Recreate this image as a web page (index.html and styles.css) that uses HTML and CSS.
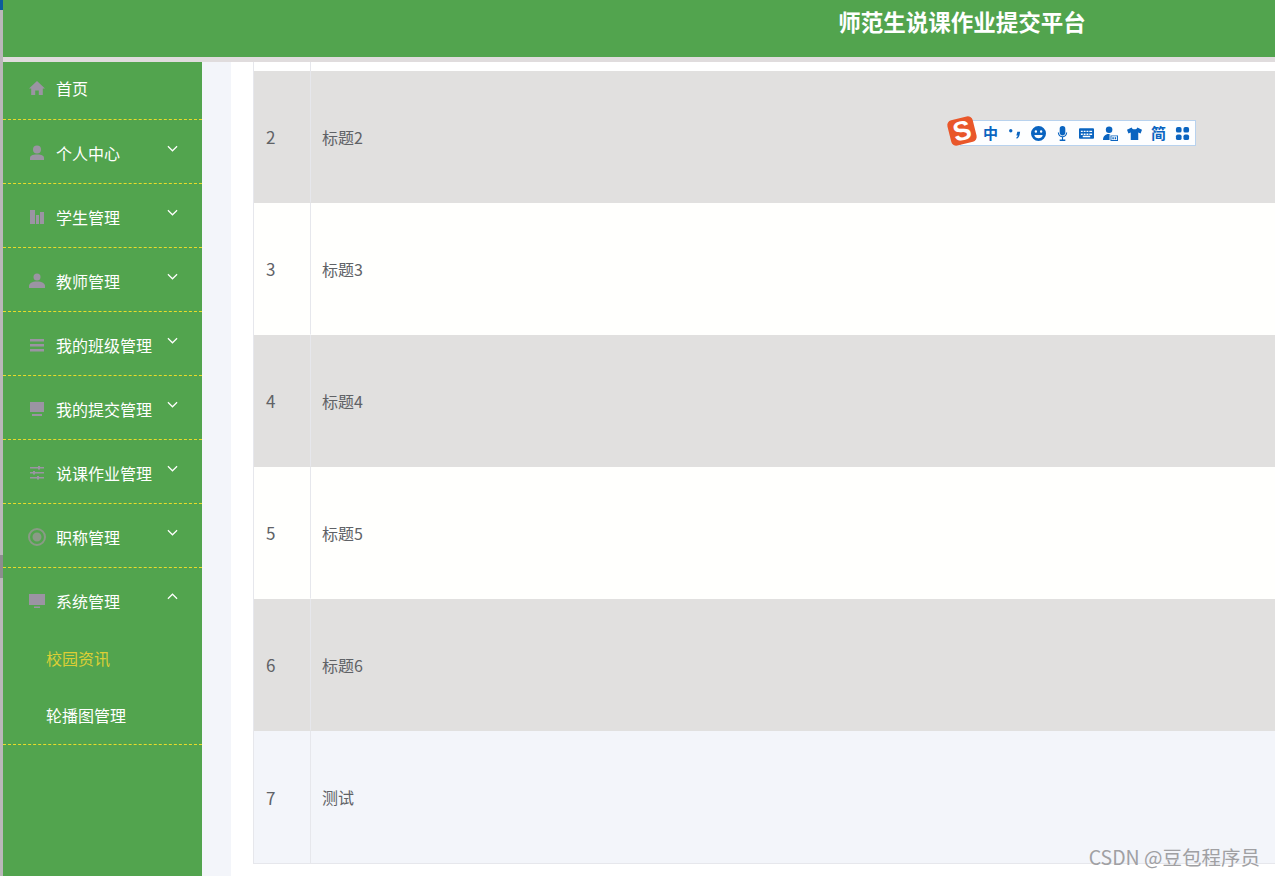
FILE: index.html
```html
<!DOCTYPE html>
<html lang="zh-CN">
<head>
<meta charset="utf-8">
<title>师范生说课作业提交平台</title>
<link rel="stylesheet" href="styles.css">
</head>
<body>
<div class="app">
  <div class="edge"><span class="edge-top"></span><span class="edge-mark"></span></div>
  <div class="main">
    <header class="topbar"><h1 class="brand">师范生说课作业提交平台</h1></header>
    <div class="divider"></div>
    <div class="body">
      <nav class="sidebar">
        <div class="nav-group"><div class="nav-item nav-home">
          <svg class="icon" viewBox="0 0 18 18"><path d="M9 2 1 9.500h2.200V16h4v-4.500h3.600V16h4V9.500H17z"/></svg>
          <span>首页</span>
        </div></div>
        <div class="nav-group"><div class="nav-item">
          <svg class="icon" viewBox="0 0 18 18"><circle cx="9" cy="5.500" r="4"/><path d="M2 16v-2c0-2 2-3.500 7-3.500s7 1.500 7 3.500v2z"/></svg>
          <span>个人中心</span>
          <svg class="chev" viewBox="0 0 12 7"><path d="M1 1l5 5 5-5"/></svg>
        </div></div>
        <div class="nav-group"><div class="nav-item">
          <svg class="icon" viewBox="0 0 18 18"><path d="M2 2h5v14H2zM8 7h3v9H8zM12 4h4v12h-4z"/></svg>
          <span>学生管理</span>
          <svg class="chev" viewBox="0 0 12 7"><path d="M1 1l5 5 5-5"/></svg>
        </div></div>
        <div class="nav-group"><div class="nav-item">
          <svg class="icon" viewBox="0 0 18 18"><circle cx="9" cy="5" r="3.500"/><path d="M1 16v-2c0-2.500 3-4.500 8-4.500s8 2 8 4.500v2z"/></svg>
          <span>教师管理</span>
          <svg class="chev" viewBox="0 0 12 7"><path d="M1 1l5 5 5-5"/></svg>
        </div></div>
        <div class="nav-group"><div class="nav-item">
          <svg class="icon" viewBox="0 0 18 18"><path d="M2 3h14v2.500H2zM2 8h14v2.500H2zM2 13h14v2.500H2z"/></svg>
          <span>我的班级管理</span>
          <svg class="chev" viewBox="0 0 12 7"><path d="M1 1l5 5 5-5"/></svg>
        </div></div>
        <div class="nav-group"><div class="nav-item">
          <svg class="icon" viewBox="0 0 18 18"><path d="M2 2h14v10H2zM4 14h10v2H4z"/></svg>
          <span>我的提交管理</span>
          <svg class="chev" viewBox="0 0 12 7"><path d="M1 1l5 5 5-5"/></svg>
        </div></div>
        <div class="nav-group"><div class="nav-item">
          <svg class="icon" viewBox="0 0 18 18"><path d="M2 3h14v1.500H2zM2 8h14v1.500H2zM2 13h14v1.500H2zM10 2h2v3.500h-2zM5 7h2v3.500H5zM9 12h2v3.500H9z"/></svg>
          <span>说课作业管理</span>
          <svg class="chev" viewBox="0 0 12 7"><path d="M1 1l5 5 5-5"/></svg>
        </div></div>
        <div class="nav-group"><div class="nav-item">
          <svg class="icon icon-soft" viewBox="0 0 18 18"><path fill-rule="evenodd" d="M9 0a9 9 0 1 0 0 18A9 9 0 0 0 9 0zm0 2a7 7 0 1 1 0 14A7 7 0 0 1 9 2zm0 2.500a4.500 4.500 0 1 0 0 9 4.500 4.500 0 0 0 0-9z"/></svg>
          <span>职称管理</span>
          <svg class="chev" viewBox="0 0 12 7"><path d="M1 1l5 5 5-5"/></svg>
        </div></div>
        <div class="nav-group">
          <div class="nav-item nav-open">
            <svg class="icon" viewBox="0 0 18 18"><path d="M1 2h16v11H1zM6 14.500h6V16H6z"/></svg>
            <span>系统管理</span>
            <svg class="chev" viewBox="0 0 12 7"><path d="M1 6l5-5 5 5"/></svg>
          </div>
          <div class="sub-item sub-active">校园资讯</div>
          <div class="sub-item">轮播图管理</div>
        </div>
      </nav>
      <div class="gutter"></div>
      <section class="content">
        <table class="data">
          <tbody>
            <tr class="row-cut"><td></td><td></td></tr>
            <tr class="row-gray"><td>2</td><td>标题2</td></tr>
            <tr class="row-white"><td>3</td><td>标题3</td></tr>
            <tr class="row-gray"><td>4</td><td>标题4</td></tr>
            <tr class="row-white"><td>5</td><td>标题5</td></tr>
            <tr class="row-gray"><td>6</td><td>标题6</td></tr>
            <tr class="row-pale"><td>7</td><td>测试</td></tr>
          </tbody>
        </table>
      </section>
    </div>
  </div>
</div>
<div class="ime">
  <span class="ime-logo"><span class="ime-s">S</span></span>
  <div class="ime-tools">
    <span class="ime-text">中</span>
    <svg class="ime-icon" viewBox="0 0 16 16"><circle cx="4" cy="5" r="1.800"/><path d="M11 6h3l-.500 3c-.3 2-1.300 3.500-3 4.500l-.7-1c1-.7 1.500-1.500 1.700-2.500H10z"/></svg>
    <svg class="ime-icon" viewBox="0 0 16 16"><path fill-rule="evenodd" d="M8 0a8 8 0 1 0 0 16A8 8 0 0 0 8 0zM5.200 4.500a1.300 1.300 0 1 1 0 2.600 1.300 1.300 0 0 1 0-2.600zm5.600 0a1.300 1.300 0 1 1 0 2.600 1.300 1.300 0 0 1 0-2.600zM3.500 9.500h9c-.5 2.200-2.300 3.500-4.500 3.500s-4-1.300-4.500-3.500z"/></svg>
    <svg class="ime-icon" viewBox="0 0 16 16"><rect x="5" y="0" width="6" height="10" rx="3"/><path d="M3 7h1.200c0 2.400 1.600 4 3.800 4s3.800-1.600 3.800-4H13c0 2.900-1.900 4.800-4.400 5.100V14.500H11V16H5v-1.500h2.400v-2.400C4.900 11.800 3 9.900 3 7z"/></svg>
    <svg class="ime-icon" viewBox="0 0 16 16"><path fill-rule="evenodd" d="M1 2.500h14a1 1 0 0 1 1 1v9a1 1 0 0 1-1 1H1a1 1 0 0 1-1-1v-9a1 1 0 0 1 1-1zM2 5v1.500h2V5zm3 0v1.500h2V5zm3 0v1.500h2V5zm3 0v1.500h3V5zM2 8v1.500h2V8zm3 0v1.500h2V8zm3 0v1.500h2V8zm3 0v1.500h3V8zM4 10.500V12h8v-1.500z"/></svg>
    <svg class="ime-icon" viewBox="0 0 16 16"><circle cx="6.500" cy="4" r="3.500"/><path d="M0 15c0-4 2.500-6.500 6-6.500 1 0 1.800.2 2.500.5H7v6z"/><path fill-rule="evenodd" d="M8 10h8v6H8zm1 1v4h6v-4z"/><path d="M10 12h1.500v2H10zM12.500 12H14v2h-1.500z"/></svg>
    <svg class="ime-icon" viewBox="0 0 16 16"><path d="M5 1.500 0 4l1.500 4L4 7v8h8V7l2.500 1L16 4l-5-2.500c-.5 1.500-1.500 2-3 2s-2.500-.5-3-2z"/></svg>
    <span class="ime-text">简</span>
    <svg class="ime-icon" viewBox="0 0 16 16"><rect x="1" y="1" width="6" height="6" rx="2"/><rect x="9" y="1" width="6" height="6" rx="2"/><rect x="1" y="9" width="6" height="6" rx="2"/><rect x="9" y="9" width="6" height="6" rx="2"/></svg>
  </div>
</div>
<div class="watermark">CSDN @豆包程序员</div>
</body>
</html>
```

FILE: styles.css
```css
* { box-sizing: border-box; }
html, body { margin: 0; height: 100%; overflow: hidden; }
body {
  font-family: "Noto Sans CJK SC", "Noto Sans", sans-serif;
  font-size: 16px;
  color: #606266;
  background: #fff;
}
.app { display: flex; height: 876px; }
.edge {
  width: 3px;
  flex: none;
  display: flex;
  flex-direction: column;
  background: #b9b7b9;
}
.edge-top { height: 10px; background: #0c5c9c; }
.edge-mark { height: 23px; margin-top: 545px; background: #8d8d8f; }
.main { flex: 1; min-width: 0; display: flex; flex-direction: column; }
.topbar {
  height: 57px;
  flex: none;
  background: #52a44e;
  display: flex;
  justify-content: center;
  padding: 5px 0 0 646px;
}
.brand {
  margin: 0;
  font-size: 22.500px;
  line-height: 33px;
  font-weight: 700;
  color: #fff;
  white-space: nowrap;
}
.divider { height: 5px; flex: none; background: #e0dcdd; }
.body { flex: 1; min-height: 0; display: flex; }
.sidebar { width: 199px; flex: none; background: #52a44e; color: #fff; }
.nav-group { border-bottom: 1px dashed #e8dc2a; }
.nav-item {
  height: 63px;
  padding: 2px 24px 0 25px;
  display: flex;
  align-items: center;
  white-space: nowrap;
}
.nav-home { height: 57px; padding-top: 0; padding-bottom: 5px; }
.nav-open { height: 62px; padding-top: 3px; }
.icon { width: 18px; height: 18px; margin-right: 10px; flex: none; fill: #9b94a3; }
.icon-soft { fill: #8a9a86; }
.chev {
  width: 11px;
  height: 7px;
  margin: 0 0 8px auto;
  flex: none;
  fill: none;
  stroke: #fff;
  stroke-width: 1.300;
}
.sub-item { height: 57px; padding: 0 0 1px 43px; display: flex; align-items: center; }
.sub-active { color: #dccf35; }
.gutter { width: 29px; flex: none; background: #f3f5fa; }
.content { flex: 1; min-width: 0; overflow: hidden; padding-left: 22px; background: #fff; }
.data {
  width: 1100px;
  table-layout: fixed;
  border-collapse: separate;
  border-spacing: 0;
  border-left: 1px solid #e6e7ec;
}
.data td {
  padding: 0 0 0 11px;
  border-right: 1px solid #e6e7ec;
  border-bottom: 1px solid transparent;
  height: 132px;
  line-height: 24px;
}
.data td:first-child { width: 57px; padding: 1px 0 0 12px; font-size: 17px; }
.data .row-cut td { height: 9px; background: #fff; padding: 0; line-height: 0; border-bottom: 0; }
.row-gray td { background: #e1e0df; }
.row-white td { background: #fffffd; }
.data .row-pale td { height: 133px; background: #f3f5fa; border-bottom-color: #e6e7ec; }
.ime {
  position: absolute;
  left: 946px;
  top: 116px;
  width: 250px;
  height: 30px;
}
.ime-logo {
  position: absolute;
  left: 3px;
  top: 2px;
  width: 26px;
  height: 26px;
  display: flex;
  align-items: center;
  justify-content: center;
  background: #e9572a;
  border-radius: 5px;
  transform: rotate(-14deg);
  z-index: 1;
}
.ime-s { color: #fff; font: 700 27px/26px "Liberation Sans", sans-serif; }
.ime-tools {
  position: absolute;
  left: 14px;
  top: 4px;
  right: 0;
  height: 26px;
  padding-left: 22px;
  display: flex;
  align-items: center;
  gap: 9px;
  background: #fdfeff;
  border: 1px solid #b8d2ee;
}
.ime-text { width: 15px; font-size: 15px; line-height: 20px; font-weight: 700; color: #0a64c0; }
.ime-icon { width: 15px; height: 15px; flex: none; fill: #0a64c0; }
.watermark {
  position: absolute;
  right: 15px;
  top: 843px;
  font-size: 19.500px;
  line-height: 28px;
  color: #a0a0a3;
  white-space: nowrap;
}
```
